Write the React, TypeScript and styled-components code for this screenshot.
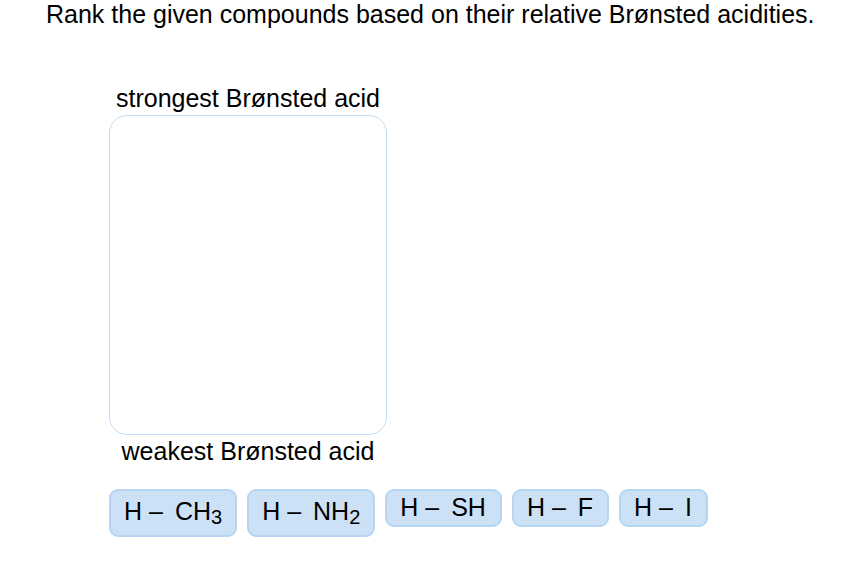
import React from "react";
import styled, { createGlobalStyle } from "styled-components";

const GlobalStyle = createGlobalStyle`
  * { box-sizing: border-box; }
  body {
    margin: 0;
    background: #fff;
    color: #000;
    font-family: "Liberation Sans", Arial, sans-serif;
    font-size: 25px;
    line-height: 28px;
  }
`;

const Page = styled.main`
  padding: 0 20px 24px 46px;
`;

const Question = styled.h1`
  margin: 0 0 56px;
  font: inherit;
`;

const Exercise = styled.section`
  padding-left: 63px;
`;

const Ranking = styled.div`
  display: flex;
  flex-direction: column;
  width: 278px;
  margin-bottom: 24px;
  text-align: center;
`;

const Label = styled.div`
  line-height: 28px;
`;

const DropZone = styled.div`
  height: 320px;
  margin: 3px 0 2px;
  border: 1px solid #c2dcf6;
  border-radius: 18px;
`;

const Choices = styled.div`
  display: flex;
  flex-wrap: wrap;
  align-items: flex-start;
  gap: 10px;
`;

const Choice = styled.button<{ $tall?: boolean }>`
  padding: ${(p) => (p.$tall ? "6px 13px 10px" : "2px 14px 4px 13px")};
  border: 2px solid #b5d5f2;
  border-radius: 9px;
  background: #cce0f6;
  color: inherit;
  font: inherit;
  white-space: nowrap;
  cursor: grab;
`;

const Bond = styled.span`
  margin-right: 12px;
`;

const Sub = styled.sub`
  font-size: 20px;
  line-height: 0;
  vertical-align: -4px;
`;

const compounds = [
  { name: "CH", count: "3" },
  { name: "NH", count: "2" },
  { name: "SH" },
  { name: "F" },
  { name: "I" },
];

export default function App() {
  return (
    <Page>
      <GlobalStyle />
      <Question>Rank the given compounds based on their relative Brønsted acidities.</Question>
      <Exercise>
        <Ranking>
          <Label>strongest Brønsted acid</Label>
          <DropZone role="list" aria-label="Ranked compounds" />
          <Label>weakest Brønsted acid</Label>
        </Ranking>
        <Choices>
          {compounds.map(({ name, count }) => (
            <Choice key={name} type="button" $tall={Boolean(count)}>
              <Bond>H –</Bond>
              {name}
              {count && <Sub>{count}</Sub>}
            </Choice>
          ))}
        </Choices>
      </Exercise>
    </Page>
  );
}
